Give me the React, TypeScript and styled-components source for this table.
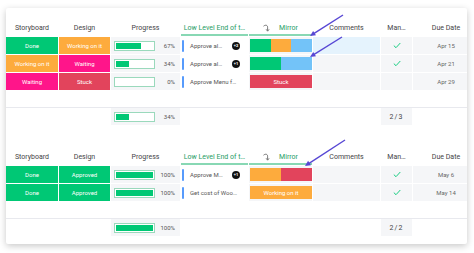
import React from 'react'
import styled, { createGlobalStyle } from 'styled-components'

const GlobalStyle = createGlobalStyle`
  html, body {
    margin: 0;
    padding: 0;
    background: #ffffff;
    font-family: Roboto, "Liberation Sans", Arial, sans-serif;
  }
`;

const COLS = '52px 51px 69px 67px 63px 67px 31px 1fr';

const colors = {
  green: '#00c875',
  orange: '#fdab3d',
  pink: '#ff158a',
  red: '#e2445c',
  blue: '#73c3f8',
};

type Tone = keyof typeof colors;

const Page = styled.div`
  position: relative;
  width: 474px;
  height: 253px;
  padding: 8px 7px 0 6px;
  box-sizing: border-box;
`;

const Card = styled.div`
  background: #fff;
  border-radius: 2px;
  box-shadow: 0 2px 7px rgba(0, 0, 0, 0.22);
  padding: 12px 0 7px;
`;

const Group = styled.section<{ $first?: boolean }>`
  margin-top: ${(p) => (p.$first ? '0' : '24px')};
`;

const GridRow = styled.div<{ $h: number }>`
  display: grid;
  grid-template-columns: ${COLS};
  column-gap: 1px;
  height: ${(p) => p.$h}px;
  margin-bottom: 1px;
`;

const HeadCell = styled.div<{ $accent?: boolean }>`
  display: flex;
  align-items: center;
  justify-content: center;
  gap: 9px;
  font-size: 7px;
  color: ${(p) => (p.$accent ? '#1f9d65' : '#444446')};
  border-bottom: 2px solid ${(p) => (p.$accent ? '#88d8b4' : 'transparent')};
  box-sizing: border-box;
  white-space: nowrap;
  padding-top: 1px;
`;

const StatusCell = styled.div<{ $tone: Tone }>`
  display: flex;
  align-items: center;
  justify-content: center;
  background: ${(p) => colors[p.$tone]};
  color: #fff;
  font-size: 6px;
`;

const GrayCell = styled.div<{ $bg?: string }>`
  display: flex;
  align-items: center;
  justify-content: center;
  background: ${(p) => p.$bg || '#f5f6f8'};
  color: #555;
  font-size: 6px;
`;

const ProgressCell = styled.div<{ $bg?: string }>`
  display: flex;
  align-items: center;
  justify-content: space-between;
  padding: 0 5px 0 3px;
  background: ${(p) => p.$bg || '#f5f6f8'};
  color: #555;
  font-size: 6px;
`;

const Bar = styled.div`
  width: 41px;
  height: 10px;
  box-sizing: border-box;
  border: 1px solid #9ad9bc;
  background: #fff;
  padding: 1px;
  display: flex;
`;

const BarFill = styled.div`
  height: 100%;
  background: #00c875;
`;

const TaskCell = styled.div`
  display: flex;
  align-items: center;
  background: #fff;
  padding-left: 1px;
  font-size: 6px;
  color: #555;
  white-space: nowrap;
`;

const Marker = styled.span`
  width: 2px;
  height: 12px;
  border-radius: 1px;
  background: #579bfc;
  margin-right: 6px;
  flex-shrink: 0;
`;

const Bubble = styled.span`
  margin-left: auto;
  margin-right: 8px;
  width: 8px;
  height: 8px;
  border-radius: 50%;
  background: #111;
  color: #fff;
  font-size: 4px;
  font-weight: 700;
  display: flex;
  align-items: center;
  justify-content: center;
`;

const MirrorCell = styled.div`
  display: flex;
  padding: 2px 0 2px 1px;
  background: #f5f6f8;
`;

const Segment = styled.div<{ $tone: Tone; $grow: number }>`
  flex: ${(p) => p.$grow};
  background: ${(p) => colors[p.$tone]};
  color: #fff;
  font-size: 6px;
  display: flex;
  align-items: center;
  justify-content: center;
`;

const DateCell = styled(GrayCell)`
  padding-left: 12px;
  color: #666;
`;

const Spacer = styled.div<{ $h: number }>`
  height: ${(p) => p.$h}px;
  border-bottom: 1px solid #e8e9ee;
`;

const SumText = styled.span`
  font-size: 7px;
  color: #444;
  letter-spacing: 1px;
`;

const Overlay = styled.svg`
  position: absolute;
  left: 0;
  top: 0;
  pointer-events: none;
`;

const Check = () => (
  <svg width="8" height="7" viewBox="0 0 8 7">
    <path d="M0.8 3.6 L3 5.7 L7.3 1" fill="none" stroke="#00c875" strokeWidth="0.9" />
  </svg>
);

const MirrorIcon = () => (
  <svg width="7" height="8" viewBox="0 0 7 8">
    <path d="M0.5 2.2 C2 0.8 4.6 0.8 4.6 3.2 L4.6 6.6" fill="none" stroke="#555" strokeWidth="0.8" />
    <path d="M3.1 5.3 L4.6 7.2 L6.1 5.3" fill="none" stroke="#555" strokeWidth="0.8" />
  </svg>
);

type Row = {
  story: [string, Tone];
  design: [string, Tone];
  progress: number;
  task: string;
  bubble?: string;
  mirror: { tone: Tone; grow: number; label?: string }[];
  highlight?: boolean;
  done: boolean;
  due: string;
};

type GroupData = { rows: Row[]; avg: number; count: string; gap: number };

const groups: GroupData[] = [
  {
    gap: 16,
    avg: 34,
    count: '2/3',
    rows: [
      {
        story: ['Done', 'green'],
        design: ['Working on it', 'orange'],
        progress: 67,
        task: 'Approve al…',
        bubble: '+2',
        mirror: [
          { tone: 'green', grow: 1 },
          { tone: 'orange', grow: 1 },
          { tone: 'blue', grow: 1 },
        ],
        highlight: true,
        done: true,
        due: 'Apr 15',
      },
      {
        story: ['Working on it', 'orange'],
        design: ['Waiting', 'pink'],
        progress: 34,
        task: 'Approve al…',
        bubble: '+1',
        mirror: [
          { tone: 'green', grow: 1 },
          { tone: 'blue', grow: 1 },
        ],
        done: true,
        due: 'Apr 21',
      },
      {
        story: ['Waiting', 'pink'],
        design: ['Stuck', 'red'],
        progress: 0,
        task: 'Approve Menu f…',
        mirror: [{ tone: 'red', grow: 1, label: 'Stuck' }],
        done: false,
        due: 'Apr 29',
      },
    ],
  },
  {
    gap: 16,
    avg: 100,
    count: '2/2',
    rows: [
      {
        story: ['Done', 'green'],
        design: ['Approved', 'green'],
        progress: 100,
        task: 'Approve M…',
        bubble: '+1',
        mirror: [
          { tone: 'orange', grow: 1 },
          { tone: 'red', grow: 1 },
        ],
        done: true,
        due: 'May 6',
      },
      {
        story: ['Done', 'green'],
        design: ['Approved', 'green'],
        progress: 100,
        task: 'Get cost of Woo…',
        mirror: [{ tone: 'orange', grow: 1, label: 'Working on it' }],
        done: true,
        due: 'May 14',
      },
    ],
  },
];

const Progress = ({ value, bg }: { value: number; bg?: string }) => (
  <ProgressCell $bg={bg}>
    <Bar>
      <BarFill style={{ width: `${value}%` }} />
    </Bar>
    <span>{value}%</span>
  </ProgressCell>
);

const Header = () => (
  <GridRow $h={16}>
    <HeadCell>Storyboard</HeadCell>
    <HeadCell>Design</HeadCell>
    <HeadCell>Progress</HeadCell>
    <HeadCell $accent>Low Level End of t…</HeadCell>
    <HeadCell $accent>
      <MirrorIcon />
      Mirror
    </HeadCell>
    <HeadCell>Comments</HeadCell>
    <HeadCell>Man…</HeadCell>
    <HeadCell style={{ paddingLeft: 12 }}>Due Date</HeadCell>
  </GridRow>
);

const Arrow = ({ x1, y1, x2, y2 }: { x1: number; y1: number; x2: number; y2: number }) => {
  const a = Math.atan2(y2 - y1, x2 - x1);
  const len = 6;
  const w = 0.45;
  const p1 = [x2 - len * Math.cos(a - w), y2 - len * Math.sin(a - w)];
  const p2 = [x2 - len * Math.cos(a + w), y2 - len * Math.sin(a + w)];
  return (
    <g>
      <line x1={x1} y1={y1} x2={x2 - 3 * Math.cos(a)} y2={y2 - 3 * Math.sin(a)} stroke="#5747d4" strokeWidth="1.4" />
      <polygon points={`${x2},${y2} ${p1[0]},${p1[1]} ${p2[0]},${p2[1]}`} fill="#5747d4" />
    </g>
  );
};

export default function App() {
  return (
    <Page>
      <GlobalStyle />
      <Card>
        {groups.map((g, gi) => (
          <Group key={gi} $first={gi === 0}>
            <Header />
            {g.rows.map((r, ri) => (
              <GridRow $h={17} key={ri}>
                <StatusCell $tone={r.story[1]}>{r.story[0]}</StatusCell>
                <StatusCell $tone={r.design[1]}>{r.design[0]}</StatusCell>
                <Progress value={r.progress} />
                <TaskCell>
                  <Marker />
                  {r.task}
                  {r.bubble && <Bubble>{r.bubble}</Bubble>}
                </TaskCell>
                <MirrorCell>
                  {r.mirror.map((m, mi) => (
                    <Segment key={mi} $tone={m.tone} $grow={m.grow}>
                      {m.label}
                    </Segment>
                  ))}
                </MirrorCell>
                <GrayCell $bg={r.highlight ? '#e5f3fd' : undefined} />
                <GrayCell>{r.done && <Check />}</GrayCell>
                <DateCell>{r.due}</DateCell>
              </GridRow>
            ))}
            <Spacer $h={g.gap} />
            <GridRow $h={17}>
              <div />
              <div />
              <Progress value={g.avg} />
              <div />
              <div />
              <div />
              <GrayCell>
                <SumText>{g.count}</SumText>
              </GrayCell>
              <div />
            </GridRow>
          </Group>
        ))}
      </Card>
      <Overlay width="474" height="253" viewBox="0 0 474 253">
        <Arrow x1={343} y1={15} x2={310} y2={36} />
        <Arrow x1={342} y1={37} x2={310} y2={57} />
        <Arrow x1={345} y1={140} x2={305} y2={166} />
      </Overlay>
    </Page>
  );
}
